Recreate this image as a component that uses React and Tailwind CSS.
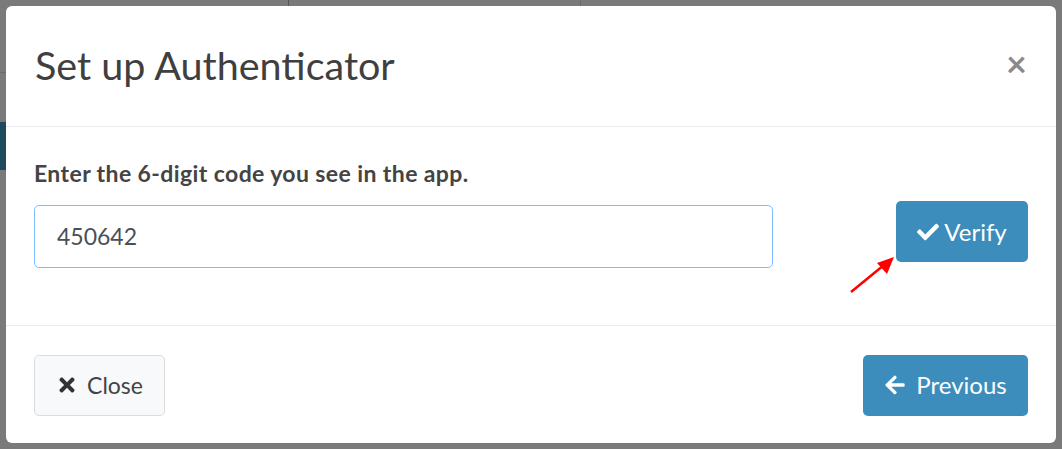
import React from "react";
import { FaCheck, FaTimes, FaArrowLeft } from "react-icons/fa";

export default function App() {
  return (
    <div
      className="relative w-[1062px] h-[449px] bg-[#7a7a7a] overflow-hidden"
      style={{ fontFamily: "Lato, 'Noto Sans', sans-serif" }}
    >
      {/* dimmed page behind */}
      <div className="absolute left-0 top-[122px] w-[8px] h-[48px] bg-[#1f4a5e]" />
      <div className="absolute left-0 top-[72px] w-[8px] h-[1px] bg-[#6a6a6a]" />
      <div className="absolute left-[288px] top-0 w-[1px] h-[6px] bg-[#555]" />
      <div className="absolute left-[580px] top-0 w-[1px] h-[6px] bg-[#6a6a6a]" />

      <div className="absolute left-[6px] top-[6px] w-[1050px] h-[437px] bg-white rounded-[6px] flex flex-col">
        {/* header */}
        <div className="h-[121px] shrink-0 border-b border-[#e9ecef] flex items-center justify-between pl-[29px] pr-[29px]">
          <h4 className="text-[39.5px] text-[#3f3f3f] leading-none pb-[2px]">Set up Authenticator</h4>
          <span className="text-[#8a8a8a] text-[36px] font-bold leading-none pb-[6px]">×</span>
        </div>
        {/* body */}
        <div className="h-[199px] shrink-0 border-b border-[#e9ecef] px-[28px] flex justify-between">
          <div className="w-[739px]">
            <div className="mt-[31px] text-[23px] tracking-[0.4px] font-bold text-[#444] leading-[30px]">
              Enter the 6-digit code you see in the app.
            </div>
            <div className="mt-[17px] h-[63px] border border-[#80bdff] rounded-[5px] flex items-center pl-[22px] text-[23px] text-[#495057]">
              450642
            </div>
          </div>
          <div className="mt-[74px]">
            <button className="w-[132px] h-[61px] bg-[#3c8dbc] rounded-[5px] text-white text-[24px] flex items-center justify-center gap-[5px]">
              <FaCheck className="w-[22px] h-[22px]" />
              Verify
            </button>
          </div>
        </div>
        {/* footer */}
        <div className="flex-1 px-[28px] flex items-center justify-between pt-[1px]">
          <button className="w-[131px] h-[61px] bg-[#f8f9fa] border border-[#dcdcdc] rounded-[5px] text-[#444] text-[23px] flex items-center justify-center gap-[9px]">
            <FaTimes className="w-[22px] h-[22px] text-[#333]" />
            Close
          </button>
          <button className="w-[165px] h-[61px] bg-[#3c8dbc] rounded-[5px] text-white text-[24px] flex items-center justify-center gap-[10px]">
            <FaArrowLeft className="w-[22px] h-[22px]" />
            Previous
          </button>
        </div>
      </div>

      {/* red annotation arrow */}
      <svg className="absolute left-0 top-0" width="1062" height="449" viewBox="0 0 1062 449">
        <line x1="851" y1="292" x2="884" y2="265" stroke="#ff0000" strokeWidth="2.5" />
        <polygon points="894,257 877,263 887,274" fill="#ff0000" />
      </svg>
    </div>
  );
}
